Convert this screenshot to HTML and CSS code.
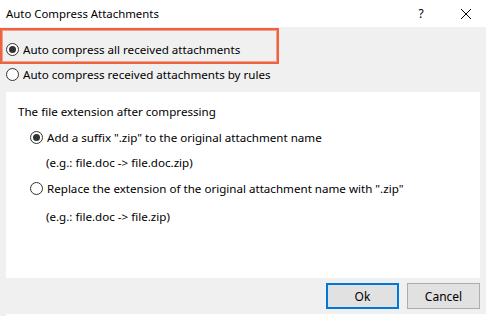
FILE: index.html
```html
<!DOCTYPE html>
<html>
<head>
<meta charset="utf-8">
<link rel="stylesheet" href="styles.css">
</head>
<body>
<div class="dialog">
  <div class="titlebar">
    <span class="title">Auto Compress Attachments</span>
    <span class="help">?</span>
    <svg class="close" width="12" height="12" viewBox="0 0 12 12"><path d="M1 1 L11 11 M11 1 L1 11" stroke="#000" stroke-width="1" fill="none"/></svg>
  </div>
  <div class="body">
    <div class="highlight"></div>
    <div class="options">
      <div class="opt"><span class="radio checked"></span><span>Auto compress all received attachments</span></div>
      <div class="opt"><span class="radio"></span><span>Auto compress received attachments by rules</span></div>
    </div>
    <div class="panel">
      <div class="line">The file extension after compressing</div>
      <div class="opt sub"><span class="radio checked"></span><span>Add a suffix ".zip" to the original attachment name</span></div>
      <div class="line example">(e.g.: file.doc -&gt; file.doc.zip)</div>
      <div class="opt sub"><span class="radio"></span><span>Replace the extension of the original attachment name with ".zip"</span></div>
      <div class="line example ex2">(e.g.: file.doc -&gt; file.zip)</div>
    </div>
    <div class="buttons">
      <button class="btn ok">Ok</button>
      <button class="btn">Cancel</button>
    </div>
    <div class="bottomstrip"></div>
  </div>
</div>
</body>
</html>
```
FILE: styles.css
```css
html, body {
  margin: 0;
  padding: 0;
  background: #f0f0f0;
}
body {
  font-family: "Noto Sans", "Liberation Sans", sans-serif;
  font-size: 11.6px;
  color: #000;
  width: 486px;
  height: 316px;
  overflow: hidden;
}
.dialog {
  display: flex;
  flex-direction: column;
  height: 316px;
}
.titlebar {
  height: 27px;
  background: #fff;
  display: flex;
  align-items: center;
  padding-left: 6px;
}
.title {
  flex: 1;
  font-size: 11.4px;
}
.help {
  width: 12px;
  margin-right: 33px;
  font-size: 12px;
  text-align: center;
}
.close {
  margin-right: 14px;
}
.body {
  position: relative;
  flex: 1;
  display: flex;
  flex-direction: column;
}
.highlight {
  position: absolute;
  left: 0;
  top: 1px;
  width: 279px;
  height: 36px;
  box-sizing: border-box;
  border: 2px solid #ec6341;
  box-shadow: inset 0 0 0 1px #f3a08a;
}
.options {
  padding: 12px 0 0 6px;
  display: flex;
  flex-direction: column;
  gap: 5px;
}
.opt {
  display: flex;
  align-items: center;
  height: 20px;
  gap: 4px;
}
.radio {
  width: 13px;
  height: 13px;
  box-sizing: border-box;
  border: 1px solid #333;
  border-radius: 50%;
  background: #fff;
  display: flex;
  align-items: center;
  justify-content: center;
  flex: none;
}
.radio.checked::after {
  content: "";
  width: 7px;
  height: 7px;
  border-radius: 50%;
  background: #333;
}
.panel {
  margin: 8px 6px 0 6px;
  height: 186px;
  background: #fff;
  padding: 10px 0 0 12px;
  box-sizing: border-box;
  display: flex;
  flex-direction: column;
  gap: 5px;
}
.line {
  height: 20px;
  line-height: 20px;
}
.opt.sub {
  margin-left: 12px;
}
.example {
  margin-left: 28px;
  margin-top: 1px;
}
.ex2 {
  margin-top: 4px;
}
.buttons {
  display: flex;
  justify-content: flex-end;
  gap: 8px;
  padding: 5px 6px 0 0;
  height: 26px;
}
.btn {
  font-family: inherit;
  font-size: 12px;
  width: 73px;
  height: 26px;
  background: #e1e1e1;
  border: 1px solid #adadad;
  padding: 0;
  color: #000;
}
.btn.ok {
  border: 2px solid #0078d7;
}
.bottomstrip {
  margin: 5px 0 0 6px;
  height: 2px;
  background: #fff;
}
```
